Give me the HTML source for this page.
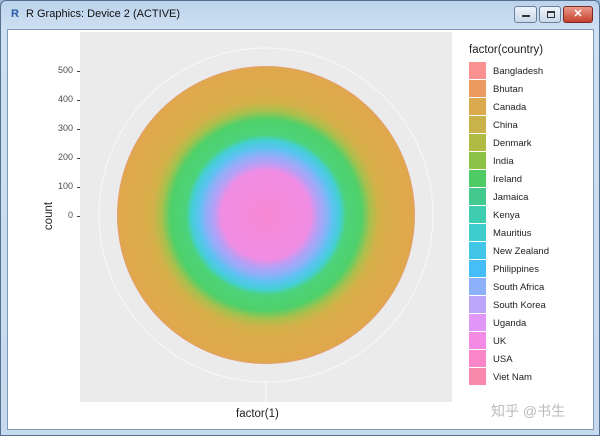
<!DOCTYPE html>
<html><head><meta charset="utf-8"><style>
*{margin:0;padding:0;box-sizing:border-box}
body{width:600px;height:436px;overflow:hidden;background:#9fb8d6;font-family:"Liberation Sans",Arial,sans-serif;position:relative}
#frame{position:absolute;left:0;top:0;width:600px;height:436px;background:linear-gradient(#bcd3ec,#cfe0f2 30px,#c6d9ee);border:1px solid #55708f;border-radius:6px 6px 0 0}
#title{position:absolute;left:26px;top:8px;font-size:11px;color:#111}
#ricon{position:absolute;left:11px;top:8px;font-size:11px;font-weight:bold;color:#2a5aa8}
.btn{position:absolute;top:6px;height:17px;border:1px solid #6b7f99;border-radius:3px;background:linear-gradient(#eef4fb,#c9d8ea)}
#content{position:absolute;left:7px;top:29px;width:587px;height:401px;background:#fff;border:1px solid #7f9ab8}
#panel{position:absolute;left:80px;top:32px;width:372px;height:370px;background:#ebebeb}
.tick{position:absolute;font-size:9px;color:#4d4d4d;text-align:right;width:30px}
.tl{position:absolute;left:77px;width:3px;height:1px;background:#444}
.lg{position:absolute;left:469px;width:17px;height:17px}
.lt{position:absolute;left:493px;font-size:9.5px;color:#222}
</style></head><body>
<div id="frame"></div>
<div id="ricon">R</div>
<div id="title">R Graphics: Device 2 (ACTIVE)</div>
<div class="btn" style="left:514px;width:23px"><div style="position:absolute;left:7px;top:8px;width:8px;height:2px;background:#333"></div></div>
<div class="btn" style="left:539px;width:22px"><div style="position:absolute;left:7px;top:4px;width:8px;height:7px;border:1px solid #333;border-top-width:2px"></div></div>
<div class="btn" style="left:563px;width:30px;background:linear-gradient(#e99a8a,#c5402c);border-color:#7b2a22;color:#fff;font-size:11px;font-weight:bold;text-align:center;line-height:15px">✕</div>
<div id="content"></div>
<div id="panel"></div>
<svg style="position:absolute;left:0;top:0" width="600" height="436">
<defs><radialGradient id="g" cx="266" cy="215" r="149" gradientUnits="userSpaceOnUse">
<stop offset="0" stop-color="#f889d4"/>
<stop offset="0.30" stop-color="#ef8de4"/>
<stop offset="0.35" stop-color="#b6a0f6"/>
<stop offset="0.40" stop-color="#93aef8"/>
<stop offset="0.45" stop-color="#5cc2f2"/>
<stop offset="0.50" stop-color="#45cfd5"/>
<stop offset="0.54" stop-color="#4cd37a"/>
<stop offset="0.64" stop-color="#4fd06a"/>
<stop offset="0.70" stop-color="#a9c04c"/>
<stop offset="0.76" stop-color="#d4b04a"/>
<stop offset="0.85" stop-color="#dcab4b"/>
<stop offset="0.99" stop-color="#e0a84c"/>
<stop offset="1" stop-color="#e59a7c"/>
</radialGradient></defs>
<circle cx="266" cy="215" r="167" fill="none" stroke="#f8f8f8" stroke-width="1"/>
<line x1="266" y1="382" x2="266" y2="402" stroke="#fff" stroke-width="1"/>
<circle cx="266" cy="215" r="149" fill="url(#g)"/>
</svg>
<div class="tick" style="left:43px;top:65px">500</div><div class="tl" style="top:71px"></div>
<div class="tick" style="left:43px;top:94px">400</div><div class="tl" style="top:100px"></div>
<div class="tick" style="left:43px;top:123px">300</div><div class="tl" style="top:129px"></div>
<div class="tick" style="left:43px;top:152px">200</div><div class="tl" style="top:158px"></div>
<div class="tick" style="left:43px;top:181px">100</div><div class="tl" style="top:187px"></div>
<div class="tick" style="left:43px;top:210px">0</div><div class="tl" style="top:216px"></div>
<div style="position:absolute;left:29px;top:210px;font-size:11.5px;color:#222;transform:rotate(-90deg);transform-origin:center;width:40px;text-align:center">count</div>
<div style="position:absolute;left:236px;top:408px;font-size:11.5px;color:#222">factor(1)</div>
<div style="position:absolute;left:469px;top:44px;font-size:11.5px;color:#222">factor(country)</div>
<div class="lg" style="top:62px;background:#f8918f"></div><div class="lt" style="top:66px">Bangladesh</div>
<div class="lg" style="top:80px;background:#eb9b5f"></div><div class="lt" style="top:84px">Bhutan</div>
<div class="lg" style="top:98px;background:#dba94e"></div><div class="lt" style="top:102px">Canada</div>
<div class="lg" style="top:116px;background:#c9b24a"></div><div class="lt" style="top:120px">China</div>
<div class="lg" style="top:134px;background:#b0bb44"></div><div class="lt" style="top:138px">Denmark</div>
<div class="lg" style="top:152px;background:#8cc346"></div><div class="lt" style="top:156px">India</div>
<div class="lg" style="top:170px;background:#4fcb65"></div><div class="lt" style="top:174px">Ireland</div>
<div class="lg" style="top:188px;background:#43c98e"></div><div class="lt" style="top:192px">Jamaica</div>
<div class="lg" style="top:206px;background:#3fcdb0"></div><div class="lt" style="top:210px">Kenya</div>
<div class="lg" style="top:224px;background:#3fcccd"></div><div class="lt" style="top:228px">Mauritius</div>
<div class="lg" style="top:242px;background:#41c6e8"></div><div class="lt" style="top:246px">New Zealand</div>
<div class="lg" style="top:260px;background:#45bdf6"></div><div class="lt" style="top:264px">Philippines</div>
<div class="lg" style="top:278px;background:#8db0fa"></div><div class="lt" style="top:282px">South Africa</div>
<div class="lg" style="top:296px;background:#bca6fa"></div><div class="lt" style="top:300px">South Korea</div>
<div class="lg" style="top:314px;background:#e197f7"></div><div class="lt" style="top:318px">Uganda</div>
<div class="lg" style="top:332px;background:#f38ae4"></div><div class="lt" style="top:336px">UK</div>
<div class="lg" style="top:350px;background:#f986c8"></div><div class="lt" style="top:354px">USA</div>
<div class="lg" style="top:368px;background:#f889ac"></div><div class="lt" style="top:372px">Viet Nam</div>
<div style="position:absolute;left:491px;top:401px;font-size:14px;color:#bbb;font-family:'Liberation Sans','Noto Sans CJK SC',sans-serif">知乎 @书生</div>
</body></html>
